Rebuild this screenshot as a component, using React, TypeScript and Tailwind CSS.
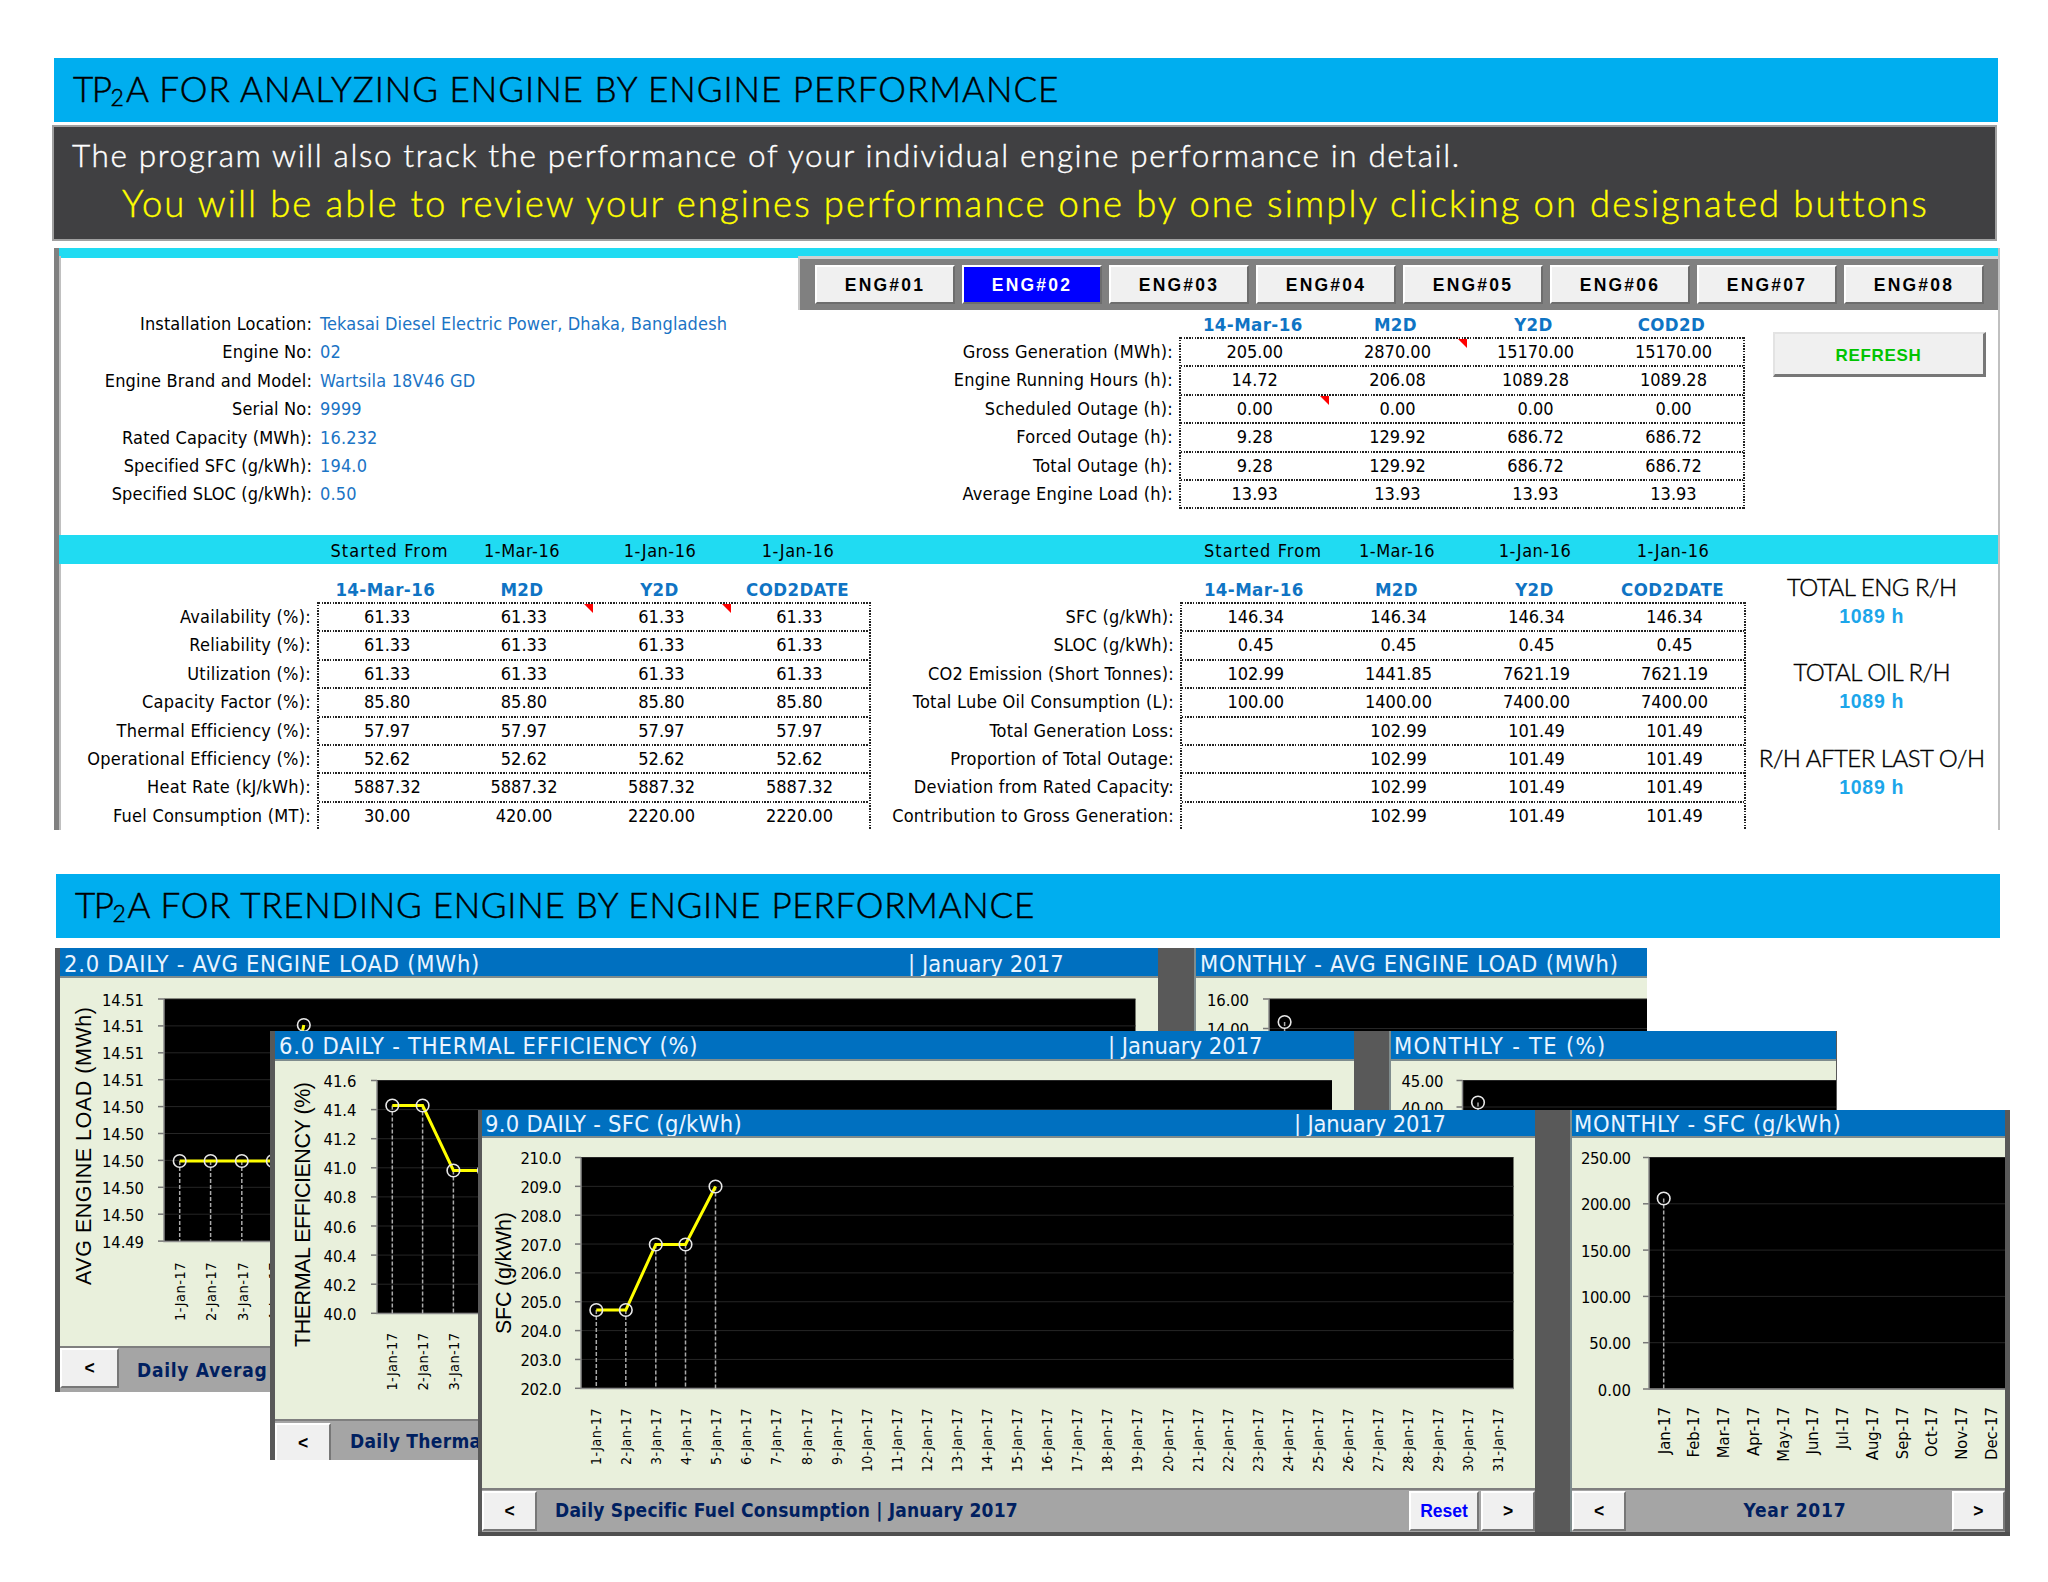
import React from 'react';

const H_DOTS =
  'h-[2px] bg-[repeating-linear-gradient(90deg,#222_0_1.5px,transparent_1.5px_2.75px)]';
const V_DOTS =
  'w-[2px] bg-[repeating-linear-gradient(180deg,#222_0_1.5px,transparent_1.5px_2.75px)]';
const TAHOMA = "'DejaVu Sans Condensed', 'DejaVu Sans', sans-serif";

const info = [
  ['Installation Location:', 'Tekasai Diesel Electric Power, Dhaka, Bangladesh'],
  ['Engine No:', '02'],
  ['Engine Brand and Model:', 'Wartsila 18V46 GD'],
  ['Serial No:', '9999'],
  ['Rated Capacity (MWh):', '16.232'],
  ['Specified SFC (g/kWh):', '194.0'],
  ['Specified SLOC (g/kWh):', '0.50'],
];

const generation = [
  ['Gross Generation (MWh):', '205.00', '2870.00', '15170.00', '15170.00'],
  ['Engine Running Hours (h):', '14.72', '206.08', '1089.28', '1089.28'],
  ['Scheduled Outage (h):', '0.00', '0.00', '0.00', '0.00'],
  ['Forced Outage (h):', '9.28', '129.92', '686.72', '686.72'],
  ['Total Outage (h):', '9.28', '129.92', '686.72', '686.72'],
  ['Average Engine Load (h):', '13.93', '13.93', '13.93', '13.93'],
];

const availability = [
  ['Availability (%):', '61.33', '61.33', '61.33', '61.33'],
  ['Reliability (%):', '61.33', '61.33', '61.33', '61.33'],
  ['Utilization (%):', '61.33', '61.33', '61.33', '61.33'],
  ['Capacity Factor (%):', '85.80', '85.80', '85.80', '85.80'],
  ['Thermal Efficiency (%):', '57.97', '57.97', '57.97', '57.97'],
  ['Operational Efficiency (%):', '52.62', '52.62', '52.62', '52.62'],
  ['Heat Rate (kJ/kWh):', '5887.32', '5887.32', '5887.32', '5887.32'],
  ['Fuel Consumption (MT):', '30.00', '420.00', '2220.00', '2220.00'],
];

const consumption = [
  ['SFC (g/kWh):', '146.34', '146.34', '146.34', '146.34'],
  ['SLOC (g/kWh):', '0.45', '0.45', '0.45', '0.45'],
  ['CO2 Emission (Short Tonnes):', '102.99', '1441.85', '7621.19', '7621.19'],
  ['Total Lube Oil Consumption (L):', '100.00', '1400.00', '7400.00', '7400.00'],
  ['Total Generation Loss:', '', '102.99', '101.49', '101.49'],
  ['Proportion of Total Outage:', '', '102.99', '101.49', '101.49'],
  ['Deviation from Rated Capacity:', '', '102.99', '101.49', '101.49'],
  ['Contribution to Gross Generation:', '', '102.99', '101.49', '101.49'],
];

const hours = ['TOTAL ENG R/H', 'TOTAL OIL R/H', 'R/H AFTER LAST O/H'];

const days = Array.from({ length: 31 }, (_, i) => `${i + 1}-Jan-17`);
const months = ['Jan', 'Feb', 'Mar', 'Apr', 'May', 'Jun', 'Jul', 'Aug', 'Sep', 'Oct', 'Nov', 'Dec'].map(
  (m) => `${m}-17`
);

function Banner({ rest, className }: { rest: string; className: string }) {
  return (
    <div
      className={`flex h-16 w-[1944px] items-center bg-[#00aeef] pb-[3px] pl-[19px] font-['Lato',sans-serif] text-[35px] leading-none font-light whitespace-nowrap text-black [-webkit-text-stroke:0.5px] ${className}`}
    >
      <span className="tracking-[-1.5px]">TP</span>
      <span className="translate-y-[9px] pr-px text-[23px]">2</span>
      <span>{rest}</span>
    </div>
  );
}

type TableProps = {
  header: string[];
  rows: string[][];
  columns: string;
  labelWidth: string;
  headerHeight: string;
  markers: string[];
  closed?: boolean;
};

function StatTable({ header, rows, columns, labelWidth, headerHeight, markers, closed }: TableProps) {
  return (
    <div className="flex whitespace-nowrap">
      <div className={`pr-[6px] text-right tracking-[0.25px] ${labelWidth}`}>
        <div className={headerHeight} />
        {rows.map(([label]) => (
          <div key={label} className="h-[28.4px] leading-[30px]">
            {label}
          </div>
        ))}
      </div>
      <div>
        <div
          className={`grid items-end text-center text-[18.5px] font-bold tracking-[0.4px] text-[#0f74c4] ${columns} ${headerHeight}`}
        >
          {header.map((h) => (
            <div key={h} className="leading-[25px]">
              {h}
            </div>
          ))}
        </div>
        <div className="flex">
          <div className={V_DOTS} />
          <div>
            {rows.map(([label, ...values], r) => (
              <div key={label} className="h-[28.4px]">
                <div className={H_DOTS} />
                <div className={`grid ${columns}`}>
                  {values.map((v, c) => (
                    <div key={c} className="relative h-[26px] text-center leading-[26px]">
                      {v}
                      {markers.includes(`${r}-${c}`) && (
                        <svg className="absolute top-0 right-0" width="9" height="9">
                          <path d="M0 0H9V9Z" fill="#f00" />
                        </svg>
                      )}
                    </div>
                  ))}
                </div>
              </div>
            ))}
            {closed && <div className={H_DOTS} />}
          </div>
          <div className={V_DOTS} />
        </div>
      </div>
    </div>
  );
}

function StartedFrom({ columns, first }: { columns: string; first: string }) {
  return (
    <div className={`grid text-center tracking-[0.5px] ${columns}`}>
      <span className={`tracking-[1.1px] ${first}`}>Started From</span>
      <span>1-Mar-16</span>
      <span>1-Jan-16</span>
      <span>1-Jan-16</span>
    </div>
  );
}

type ChartProps = {
  // view box of the pane, the other coordinates share its space
  x: number;
  y: number;
  w: number;
  h: number;
  plot: [number, number, number, number];
  labelRight: number;
  labelWidth: number;
  ticks: string[];
  step: number;
  points: [number, number][];
  categories?: string[];
  first?: number;
  pitch?: number;
  dateTop?: number;
  dateSize?: number;
  charWidth?: number;
  title?: { text: string; x: number; top: number; bottom: number };
};

function Chart(p: ChartProps) {
  const [left, top, right, bottom] = p.plot;
  return (
    <svg
      className="block"
      width={p.w}
      height={p.h}
      viewBox={`${p.x} ${p.y} ${p.w} ${p.h}`}
      style={{ fontFamily: TAHOMA }}
    >
      <rect x={left} y={top} width={right - left} height={bottom - top} fill="#000" />
      {p.ticks.map((t, i) => {
        const y = top + i * p.step;
        return (
          <g key={i}>
            <line x1={left} x2={right} y1={y} y2={y} stroke="#262626" />
            <line x1={left - 6} x2={left} y1={y} y2={y} stroke="#777" strokeWidth="1.5" />
            <text
              x={p.labelRight}
              y={y + 6.5}
              textAnchor="end"
              fontSize="16.5"
              textLength={(p.labelWidth * t.length) / p.ticks[0].length}
            >
              {t}
            </text>
          </g>
        );
      })}
      <path d={`M${left} ${top}V${bottom}H${right}`} fill="none" stroke="#8a8a8a" strokeWidth="1.5" />
      {p.points.map(([x, y]) => (
        <line key={x} x1={x} x2={x} y1={y} y2={bottom} stroke="#aaa" strokeWidth="1.5" strokeDasharray="4 2" />
      ))}
      <polyline
        points={p.points.map((pt) => pt.join(',')).join(' ')}
        fill="none"
        stroke="#ff0"
        strokeWidth="3"
      />
      {p.points.map(([x, y]) => (
        <circle key={x} cx={x} cy={y} r="6.3" fill="none" stroke="#e8e8e8" strokeWidth="1.6" />
      ))}
      {p.categories?.map((c, i) => {
        const x = p.first! + i * p.pitch!;
        return (
          <text
            key={c}
            transform={`translate(${x + 4.5} ${p.dateTop}) rotate(-90)`}
            textAnchor="end"
            fontSize={p.dateSize ?? 14}
            textLength={p.charWidth && p.charWidth * c.length}
          >
            {c}
          </text>
        );
      })}
      {p.title && (
        <text
          transform={`translate(${p.title.x + 6.5} ${p.title.bottom}) rotate(-90)`}
          fontSize="21.5"
          fontFamily="'Liberation Sans', sans-serif"
          textLength={p.title.bottom - p.title.top}
        >
          {p.title.text}
        </text>
      )}
    </svg>
  );
}

function FooterButton({ children, className }: { children: React.ReactNode; className: string }) {
  return (
    <button
      className={`h-10 border-2 border-t-white border-r-[#777] border-b-[#777] border-l-white bg-[#f0f0f0] pt-0.5 font-['Liberation_Sans',sans-serif] text-[17.5px] leading-none font-bold ${className}`}
    >
      {children}
    </button>
  );
}

function PaneTitle({ children, className }: { children: React.ReactNode; className: string }) {
  return (
    <div
      className={`flex items-center overflow-hidden border-b-2 border-[#7f8c8d] bg-[#0070c0] text-[23.5px] leading-none whitespace-nowrap text-[#eaf4ff] ${className}`}
    >
      {children}
    </div>
  );
}

export default function App() {
  return (
    <div className="relative h-[1582px] w-[2048px] overflow-hidden bg-white pt-[58px] pl-[54px] font-['DejaVu_Sans_Condensed','DejaVu_Sans',sans-serif] text-[18px] text-black">
      <Banner rest="A FOR ANALYZING ENGINE BY ENGINE PERFORMANCE" className="tracking-[1.02px]" />
      <div className="mt-[3px] -ml-[2px] h-[116px] w-[1945px] border-2 border-[#a0a0a0] bg-[#404042] pt-[8px] font-['Lato',sans-serif] font-light whitespace-nowrap">
        <div className="pl-[18px] text-[31.5px] leading-[40px] tracking-[1.6px] text-white [-webkit-text-stroke:0.4px]">
          The program will also track the performance of your individual engine performance in detail.
        </div>
        <div className="pt-[5px] pl-[68px] text-[36.5px] leading-[46px] tracking-[2.07px] text-[#ff0] [-webkit-text-stroke:0.4px]">
          You will be able to review your engines performance one by one simply clicking on designated buttons
        </div>
      </div>

      {/* Engine figures */}
      <div className="mt-[7px] h-[582px] w-[1946px] overflow-hidden border-r-2 border-l-[5px] border-r-[#c0c0c0] border-l-[#808080]">
        <div className="-mr-0.5 h-[10px] bg-[#20dbf2]" />
        <div className="-mt-[2px] h-[279px] border-l-2 border-[#c0c0c0]">
          <div className="-mr-px ml-auto flex h-[54px] w-[1201px] gap-[7px] border-t-[3px] border-l-2 border-t-[#d0d0d0] border-l-[#c8c8c8] bg-[#808080] pt-[6px] pl-[15px]">
            {['01', '02', '03', '04', '05', '06', '07', '08'].map((n) => (
              <button
                key={n}
                className={`h-[39px] w-[140px] border-2 border-t-white border-r-[#6d6d6d] border-b-[#6d6d6d] border-l-white pt-0.5 font-['Liberation_Sans',sans-serif] text-[17.5px] leading-none font-bold tracking-[2.2px] ${
                  n === '02' ? 'bg-[#0000ff] text-white' : 'bg-[#f0f0f0]'
                }`}
              >
                {`ENG#${n}`}
              </button>
            ))}
          </div>
          <div className="flex">
            <div className="w-[780px] whitespace-nowrap">
              {info.map(([label, value]) => (
                <div key={label} className="flex h-[28.4px] gap-[8px] leading-[27px] tracking-[0.15px]">
                  <span className="w-[251px] text-right">{label}</span>
                  <span className="text-[#1b74c5]">{value}</span>
                </div>
              ))}
            </div>
            <StatTable
              header={['14-Mar-16', 'M2D', 'Y2D', 'COD2D']}
              rows={generation}
              columns="grid-cols-[147.5px_138px_138px_138px]"
              labelWidth="w-[338px]"
              headerHeight="h-[27px]"
              markers={['0-1', '2-0']}
              closed
            />
            <button className="mt-[22px] ml-[28px] h-[45px] w-[213px] border-2 border-t-[#e3e3e3] border-r-[3px] border-r-[#777] border-b-[3px] border-b-[#777] border-l-[#e3e3e3] bg-[#f0f0f0] pt-[3px] font-['Liberation_Sans',sans-serif] text-[17px] leading-none font-bold tracking-[0.7px] text-[#00c400]">
              REFRESH
            </button>
          </div>
        </div>
        <div className="-mr-0.5 flex h-[29px] bg-[#20dbf2] leading-[31px] whitespace-nowrap">
          <div className="w-[256px]" />
          <StartedFrom columns="grid-cols-[138px_138px_138px_138px]" first="pl-[11px]" />
          <div className="w-[311px]" />
          <StartedFrom columns="grid-cols-[150px_138px_138px_138px]" first="pl-[20px]" />
        </div>
        <div className="flex h-[268px] overflow-hidden border-l-2 border-[#c0c0c0]">
          <StatTable
            header={['14-Mar-16', 'M2D', 'Y2D', 'COD2DATE']}
            rows={availability}
            columns="grid-cols-[136.5px_137px_138px_138px]"
            labelWidth="w-[256px]"
            headerHeight="h-[38px]"
            markers={['0-1', '0-2']}
          />
          <StatTable
            header={['14-Mar-16', 'M2D', 'Y2D', 'COD2DATE']}
            rows={consumption}
            columns="grid-cols-[147.5px_138px_138px_138px]"
            labelWidth="w-[309.5px]"
            headerHeight="h-[38px]"
            markers={[]}
          />
          <div className="w-[254px] pt-[7px] text-center">
            {hours.map((h) => (
              <div key={h} className="h-[85.3px]">
                <div className="font-['Lato',sans-serif] text-[24px] leading-[32px] font-light tracking-[-0.5px] whitespace-nowrap [-webkit-text-stroke:0.4px]">
                  {h}
                </div>
                <div className="font-['Liberation_Sans',sans-serif] text-[19.5px] leading-[26px] font-bold tracking-[0.7px] text-[#1ca6ea]">
                  1089 h
                </div>
              </div>
            ))}
          </div>
        </div>
      </div>

      <Banner rest="A FOR TRENDING ENGINE BY ENGINE PERFORMANCE" className="mt-[44px] ml-[2px] tracking-[0.75px]" />

      {/* Stacked trend windows, the last one in front */}
      <div className="absolute top-[948px] left-[55px] flex h-[444px] w-[1592px] gap-[36px] overflow-hidden bg-[#595959] pl-[5px]">
        <div className="w-[1098px] shrink-0 bg-[#e9f0dc]">
          <PaneTitle className="h-[30px] pl-[4px]">
            <span className="w-[844px] pt-[6px] tracking-[0.75px]">2.0 DAILY - AVG ENGINE LOAD (MWh)</span>
            <span className="pt-[6px] tracking-[0.1px]">| January 2017</span>
          </PaneTitle>
          <Chart
            x={60}
            y={978}
            w={1098}
            h={368}
            plot={[164, 999, 1135.5, 1241.5]}
            labelRight={144}
            labelWidth={42}
            ticks={['14.51', '14.51', '14.51', '14.51', '14.50', '14.50', '14.50', '14.50', '14.50', '14.49']}
            step={26.9}
            points={[
              [179.7, 1161],
              [210.6, 1161],
              [241.8, 1161],
              [272.8, 1161],
              [303.8, 1025],
            ]}
            categories={days.slice(0, 4)}
            first={180}
            pitch={31.5}
            dateTop={1262.5}
            dateSize={14.5}
            charWidth={7.3}
            title={{ text: 'AVG ENGINE LOAD (MWh)', x: 84, top: 1007, bottom: 1285 }}
          />
          <div className="flex h-[46px] items-start border-t-2 border-[#7f7f7f] bg-[#a5a5a5]">
            <FooterButton className="w-[59px]">&lt;</FooterButton>
            <span className="pl-[18px] text-[19px] leading-[44px] font-bold tracking-[0.7px] whitespace-nowrap text-[#002060]">
              Daily Averag
            </span>
          </div>
        </div>
        <div className="w-[453px] shrink-0 border-l-2 border-[#7f8c8d] bg-[#e9f0dc]">
          <PaneTitle className="h-[30px] pl-[4px]">
            <span className="pt-[6px] tracking-[0.8px]">MONTHLY - AVG ENGINE LOAD (MWh)</span>
          </PaneTitle>
          <Chart
            x={1196}
            y={978}
            w={451}
            h={53}
            plot={[1269, 999, 1660, 1241]}
            labelRight={1249}
            labelWidth={42}
            ticks={['16.00', '14.00']}
            step={29.5}
            points={[[1284.6, 1022]]}
          />
        </div>
      </div>

      <div className="absolute top-[1031px] left-[270px] flex h-[429px] w-[1567px] gap-[35px] overflow-hidden bg-[#595959] pr-px pl-[5px]">
        <div className="w-[1079px] shrink-0 bg-[#e9f0dc]">
          <PaneTitle className="h-[30px] pl-[4px]">
            <span className="w-[829px] pt-[4px] tracking-[0.8px]">6.0 DAILY - THERMAL EFFICIENCY (%)</span>
            <span className="pt-[4px]">| January 2017</span>
          </PaneTitle>
          <Chart
            x={275}
            y={1061}
            w={1079}
            h={358}
            plot={[377, 1080.5, 1332, 1313.5]}
            labelRight={356.5}
            labelWidth={33}
            ticks={['41.6', '41.4', '41.2', '41.0', '40.8', '40.6', '40.4', '40.2', '40.0']}
            step={29.1}
            points={[
              [392.3, 1105.5],
              [422.6, 1105.5],
              [453.4, 1170.5],
              [484, 1170.5],
            ]}
            categories={days.slice(0, 3)}
            first={392.3}
            pitch={31}
            dateTop={1333}
            dateSize={14.5}
            charWidth={7.2}
            title={{ text: 'THERMAL EFFICIENCY (%)', x: 303, top: 1082, bottom: 1347 }}
          />
          <div className="flex h-[41px] items-start border-t-2 border-[#7f7f7f] bg-[#a5a5a5]">
            <FooterButton className="mt-[2px] w-[56px]">&lt;</FooterButton>
            <span className="pl-[19px] text-[19px] leading-[41px] font-bold tracking-[0.3px] whitespace-nowrap text-[#002060]">
              Daily Therma
            </span>
          </div>
        </div>
        <div className="grow border-l-2 border-[#7f8c8d] bg-[#e9f0dc]">
          <PaneTitle className="h-[30px] pl-[3px]">
            <span className="pt-[4px] tracking-[1.3px]">MONTHLY - TE (%)</span>
          </PaneTitle>
          <Chart
            x={1391}
            y={1061}
            w={445}
            h={49}
            plot={[1462.5, 1080.5, 1850, 1313]}
            labelRight={1443.5}
            labelWidth={42}
            ticks={['45.00', '40.00']}
            step={26.5}
            points={[[1478, 1102.5]]}
          />
        </div>
      </div>

      <div className="absolute top-[1110px] left-[478px] flex h-[426px] w-[1532px] gap-[35px] overflow-hidden border-b-4 border-[#4f4f4f] bg-[#595959] pl-1">
        <div className="w-[1053px] shrink-0 bg-[#e9f0dc]">
          <PaneTitle className="h-[28px] pl-[3px]">
            <span className="w-[809px] pt-[3px] tracking-[0.3px]">9.0 DAILY - SFC (g/kWh)</span>
            <span className="pt-[3px] tracking-[-0.2px]">| January 2017</span>
          </PaneTitle>
          <Chart
            x={482}
            y={1138}
            w={1053}
            h={350}
            plot={[581, 1157.5, 1513.5, 1388.5]}
            labelRight={561.5}
            labelWidth={41}
            ticks={['210.0', '209.0', '208.0', '207.0', '206.0', '205.0', '204.0', '203.0', '202.0']}
            step={28.85}
            points={[
              [596.3, 1310],
              [625.8, 1310],
              [655.8, 1244.5],
              [685.5, 1244.5],
              [715.5, 1186.5],
            ]}
            categories={days}
            first={596.5}
            pitch={30.08}
            dateTop={1408.5}
            charWidth={7.05}
            title={{ text: 'SFC (g/kWh)', x: 504.5, top: 1212, bottom: 1334 }}
          />
          <div className="flex h-[44px] items-start border-t-2 border-[#7f7f7f] bg-[#a5a5a5] pt-px">
            <FooterButton className="w-[55px]">&lt;</FooterButton>
            <span className="grow pl-[18px] text-[19px] leading-[38px] font-bold tracking-[0.19px] whitespace-nowrap text-[#002060]">
              Daily Specific Fuel Consumption | January 2017
            </span>
            <FooterButton className="mr-[2px] w-[70px] text-[#0000ff]">Reset</FooterButton>
            <FooterButton className="w-[54px]">&gt;</FooterButton>
          </div>
        </div>
        <div className="w-[435px] shrink-0 border-l-2 border-[#7f8c8d] bg-[#e9f0dc]">
          <PaneTitle className="h-[28px] pl-[2px]">
            <span className="pt-[3px] tracking-[0.7px]">MONTHLY - SFC (g/kWh)</span>
          </PaneTitle>
          <Chart
            x={1572}
            y={1138}
            w={433}
            h={350}
            plot={[1649, 1157.5, 2010, 1389]}
            labelRight={1631}
            labelWidth={50}
            ticks={['250.00', '200.00', '150.00', '100.00', '50.00', '0.00']}
            step={46.3}
            points={[[1663.7, 1198.5]]}
            categories={months}
            first={1665}
            pitch={29.75}
            dateTop={1407}
            dateSize={16.5}
          />
          <div className="flex h-[44px] items-start justify-between border-t-2 border-[#7f7f7f] bg-[#a5a5a5] pt-px">
            <FooterButton className="w-[54px]">&lt;</FooterButton>
            <span className="pl-3 text-[19px] leading-[38px] font-bold tracking-[0.8px] text-[#002060]">Year 2017</span>
            <FooterButton className="w-[53px]">&gt;</FooterButton>
          </div>
        </div>
      </div>
    </div>
  );
}
